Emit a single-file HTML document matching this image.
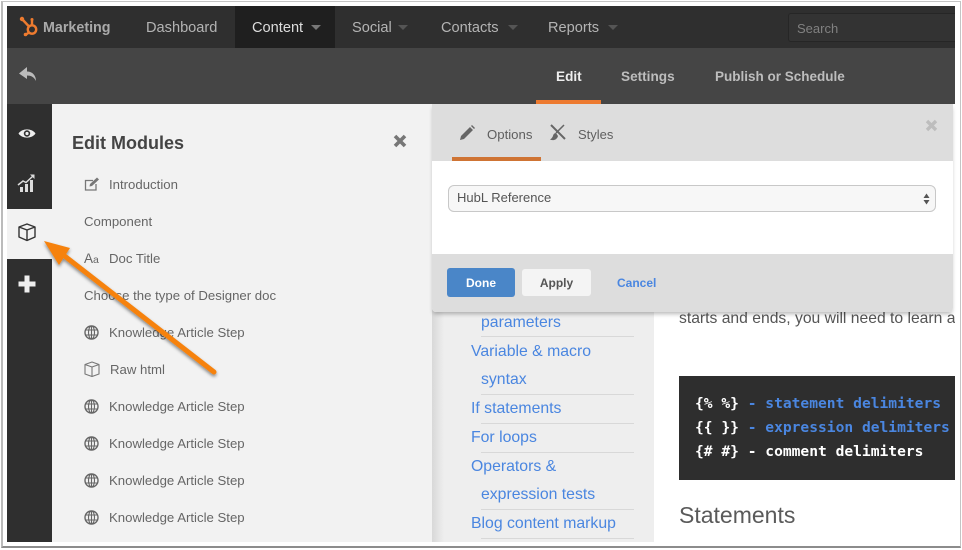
<!DOCTYPE html>
<html><head><meta charset="utf-8">
<style>
*{box-sizing:border-box}
html,body{margin:0;padding:0;width:962px;height:550px;overflow:hidden;background:#fff}
body{font-family:"Liberation Sans",Arial,sans-serif;position:relative}
.a{position:absolute}
.t{position:absolute;white-space:nowrap;line-height:18px}
.nav{font-size:14.6px;color:#b4b4b4;top:19px}
.sub{font-size:13.6px;color:#bdbdbd;font-weight:bold;top:68px}
.li{font-size:13.2px;color:#666;left:109px}
.lk{font-size:15.8px;color:#4a86e0}
.hr{position:absolute;height:1px;background:#d8d8d8;left:481px;width:153px}
.tri{position:absolute;width:0;height:0;border-left:5px solid transparent;border-right:5px solid transparent;border-top:5px solid #666}
.code{font-family:"DejaVu Sans Mono","Liberation Mono",monospace;font-weight:bold;font-size:14.6px;position:absolute;left:695px;white-space:pre;line-height:18px;color:#fff}
.code b{color:#4a86e0}
</style></head><body>
<div class="a" style="left:1px;top:1px;width:960px;height:547px;border:1px solid #c4c4c4;border-bottom:2px solid #8c8c8c;border-left:2px solid #bbb"></div>
<div class="a" style="left:7px;top:6px;width:948px;height:536px;background:#fff;overflow:hidden"></div>

<!-- top nav -->
<div class="a" style="left:7px;top:6px;width:948px;height:42px;background:#2f2f2f"></div>
<div class="a" style="left:235px;top:6px;width:100px;height:42px;background:#1f1f1f"></div>
<svg class="a" style="left:19px;top:16px" width="22" height="22" viewBox="0 0 22 22"><g fill="none" stroke="#ee7b2f" stroke-width="2.400"><circle cx="13" cy="13.500" r="4.200"/><path d="M3 3L10 10.500M13 9V3.500M10 16.500L7 18.500"/></g><circle cx="3" cy="3" r="2.200" fill="#ee7b2f"/><circle cx="13" cy="3.500" r="1.500" fill="#ee7b2f"/><circle cx="6.500" cy="18.500" r="1.800" fill="#ee7b2f"/></svg>
<div class="t nav" style="left:43px;font-weight:bold;color:#aaa;font-size:14.3px">Marketing</div>
<div class="t nav" style="left:146px">Dashboard</div>
<div class="t nav" style="left:252px;color:#ddd">Content</div><div class="tri" style="left:311px;top:25px;border-top-color:#777"></div>
<div class="t nav" style="left:352px">Social</div><div class="tri" style="left:398px;top:25px;border-top-color:#555"></div>
<div class="t nav" style="left:441px">Contacts</div><div class="tri" style="left:508px;top:25px;border-top-color:#555"></div>
<div class="t nav" style="left:548px">Reports</div><div class="tri" style="left:608px;top:25px;border-top-color:#555"></div>
<div class="a" style="left:788px;top:13px;width:167px;height:29px;background:#333;border:1px solid #262626;border-right:0;border-radius:3px 0 0 3px"></div>
<div class="t" style="left:797px;top:20px;font-size:13px;color:#818181">Search</div>

<!-- sub nav -->
<div class="a" style="left:7px;top:48px;width:948px;height:56px;background:#454545"></div>
<svg class="a" style="left:18px;top:66px" width="19" height="16" viewBox="0 0 19 16"><path d="M9 1L1 7.500L9 13V9.500C13 9.500 16 11 18 15C18 9.500 14.500 5.500 9 5.500Z" fill="#bbb"/></svg>
<div class="t sub" style="left:556px;color:#eee">Edit</div>
<div class="t sub" style="left:621px">Settings</div>
<div class="t sub" style="left:715px;font-size:13.500px">Publish or Schedule</div>
<div class="a" style="left:536px;top:100px;width:65px;height:4px;background:#ed7a30"></div>

<!-- main bg -->
<div class="a" style="left:432px;top:104px;width:222px;height:438px;background:#eee"></div>
<div class="a" style="left:432px;top:104px;width:12px;height:438px;background:linear-gradient(to right,#d8d8d8,#eee)"></div>
<div class="t lk" style="left:481px;top:314px">parameters</div><div class="hr" style="top:336px"></div>
<div class="t lk" style="left:471px;top:343px">Variable &amp; macro</div>
<div class="t lk" style="left:481px;top:371px">syntax</div><div class="hr" style="top:394px"></div>
<div class="t lk" style="left:471px;top:400px">If statements</div><div class="hr" style="top:423px"></div>
<div class="t lk" style="left:471px;top:429px">For loops</div><div class="hr" style="top:452px"></div>
<div class="t lk" style="left:471px;top:458px">Operators &amp;</div>
<div class="t lk" style="left:481px;top:486px">expression tests</div><div class="hr" style="top:509px"></div>
<div class="t lk" style="left:471px;top:515px">Blog content markup</div><div class="hr" style="top:538px"></div>

<div class="t" style="left:679px;top:310px;font-size:15.7px;color:#555;width:276px;overflow:hidden">starts and ends, you will need to learn a</div>
<div class="a" style="left:679px;top:376px;width:276px;height:104px;background:#2e2e2e"></div>
<div class="code" style="top:395px">{% %} <b>- statement delimiters</b></div>
<div class="code" style="top:419px">{{ }} <b>- expression delimiters</b></div>
<div class="code" style="top:443px">{# #} - comment delimiters</div>
<div class="t" style="left:679px;top:502px;font-size:23px;line-height:26px;color:#5a5a5a">Statements</div>

<!-- left rail -->
<div class="a" style="left:7px;top:104px;width:45px;height:438px;background:#2f2f2f"></div>
<div class="a" style="left:7px;top:209px;width:45px;height:50px;background:#f2f2f2"></div>
<svg class="a" style="left:18px;top:127px" width="18" height="13" viewBox="0 0 18 13"><path d="M0.500 6.500C4 1 14 1 17.500 6.500C14 12 4 12 0.500 6.500Z" fill="#eee"/><circle cx="9" cy="6.500" r="3.200" fill="#2f2f2f"/><circle cx="9" cy="6.500" r="1.600" fill="#eee"/></svg>
<svg class="a" style="left:17px;top:173px" width="20" height="20" viewBox="0 0 20 20"><g fill="#ddd"><rect x="3" y="14" width="3" height="5"/><rect x="8" y="11" width="3" height="8"/><rect x="13" y="7" width="3" height="12"/></g><path d="M1 12L6 8L9 9.500L16 3" fill="none" stroke="#ddd" stroke-width="1.500"/><path d="M13 1.500H17.500V6Z" fill="#ddd"/></svg>
<svg class="a" style="left:17px;top:222px" width="20" height="20" viewBox="0 0 20 20"><path d="M2 5L10 2L18 5V15L10 18.500L2 15ZM2 5L10 8L18 5M10 8V18.500" fill="none" stroke="#333" stroke-width="1.400" stroke-linejoin="round"/></svg>
<svg class="a" style="left:18px;top:275px" width="18" height="18" viewBox="0 0 18 18"><path d="M6.500 0.500H11.500V6.500H17.500V11.500H11.500V17.500H6.500V11.500H0.500V6.500H6.500Z" fill="#eee"/></svg>

<!-- sidebar -->
<div class="a" style="left:52px;top:104px;width:380px;height:438px;background:#f2f2f2"></div>
<div class="t" style="left:72px;top:133px;font-size:18px;font-weight:bold;color:#444;line-height:20px">Edit Modules</div>
<svg class="a" style="left:393px;top:134px" width="14" height="14" viewBox="0 0 14 14"><path d="M2 2L12 12M12 2L2 12" stroke="#777" stroke-width="3.600"/></svg>

<svg class="a" style="left:84px;top:176px" width="16" height="16" viewBox="0 0 16 16"><path d="M12 8V14H1.500V4.500H9" fill="none" stroke="#777" stroke-width="1.300"/><path d="M5.500 10.500L6 8L13 1.500L15 3.500L8 10Z" fill="#777"/></svg>
<div class="t li" style="top:176px">Introduction</div>
<div class="t li" style="left:84px;top:213px">Component</div>
<div class="t" style="left:84px;top:250px;font-size:13.500px;color:#666;font-weight:normal">A<span style="font-size:10.500px">a</span></div>
<div class="t li" style="top:250px">Doc Title</div>
<div class="t li" style="left:84px;top:287px">Choose the type of Designer doc</div>
<svg width="0" height="0" style="position:absolute"><defs><g id="g" fill="none" stroke="#666" stroke-width="1.100"><circle cx="7.500" cy="7.500" r="6.500" stroke-width="1.400"/><ellipse cx="7.500" cy="7.500" rx="3" ry="6.500"/><path d="M1.500 5H13.500M1.500 10H13.500M7.500 1V14"/></g></defs></svg>
<svg class="a" style="left:84px;top:325px" width="15" height="15"><use href="#g"/></svg>
<div class="t li" style="top:324px">Knowledge Article Step</div>
<svg class="a" style="left:84px;top:361px" width="16" height="16" viewBox="0 0 16 16"><path d="M1 3.500L8 1L15 3.500V13L8 15.500L1 13ZM1 3.500L8 6L15 3.500M8 6V15.500" fill="none" stroke="#777" stroke-width="1.100" stroke-linejoin="round"/></svg>
<div class="t li" style="left:110px;top:361px">Raw html</div>
<svg class="a" style="left:84px;top:399px" width="15" height="15"><use href="#g"/></svg>
<div class="t li" style="top:398px">Knowledge Article Step</div>
<svg class="a" style="left:84px;top:436px" width="15" height="15"><use href="#g"/></svg>
<div class="t li" style="top:435px">Knowledge Article Step</div>
<svg class="a" style="left:84px;top:473px" width="15" height="15"><use href="#g"/></svg>
<div class="t li" style="top:472px">Knowledge Article Step</div>
<svg class="a" style="left:84px;top:510px" width="15" height="15"><use href="#g"/></svg>
<div class="t li" style="top:509px">Knowledge Article Step</div>

<!-- modal -->
<div class="a" style="left:432px;top:104px;width:521px;height:208px;background:#fff;border-radius:0 0 4px 4px;box-shadow:0 3px 4px -1px rgba(0,0,0,.28)"></div>
<div class="a" style="left:432px;top:104px;width:521px;height:57px;background:#ddd"></div>
<div class="a" style="left:432px;top:254px;width:521px;height:58px;background:#ddd;border-radius:0 0 4px 4px"></div>
<div class="a" style="left:452px;top:157px;width:89px;height:4px;background:#cf7434"></div>
<svg class="a" style="left:459px;top:125px" width="16" height="16" viewBox="0 0 16 16"><path d="M1 15L2 11L11 2L14 5L5 14Z M12 1L13 0L16 3L15 4Z" fill="#666"/></svg>
<div class="t" style="left:487px;top:126px;font-size:13.200px;color:#5f5f5f">Options</div>
<svg class="a" style="left:549px;top:124px" width="18" height="18" viewBox="0 0 18 18"><path d="M2 1L16 15" stroke="#666" stroke-width="2"/><path d="M15 1L7 9" stroke="#666" stroke-width="1.500"/><path d="M7 9C5 9 4 11 4 12C3 14 2 15 1 15.500C4 17 8 16 9 12Z" fill="#666"/></svg>
<div class="t" style="left:578px;top:126px;font-size:13px;color:#5f5f5f">Styles</div>
<svg class="a" style="left:925px;top:119px" width="13" height="13" viewBox="0 0 13 13"><path d="M2 2L11 11M11 2L2 11" stroke="#bdbdbd" stroke-width="3.400"/></svg>

<div class="a" style="left:448px;top:185px;width:488px;height:27px;background:#f7f7f7;border:1px solid #c8c8c8;border-radius:6px"></div>
<div class="t" style="left:457px;top:189px;font-size:13px;color:#555">HubL Reference</div>
<svg class="a" style="left:922px;top:193px" width="9" height="12" viewBox="0 0 9 12"><path d="M4.500 0.500L7.500 5H1.500ZM4.500 11.500L1.500 7H7.500Z" fill="#555"/></svg>

<div class="a" style="left:447px;top:268px;width:68px;height:29px;background:#4a86c8;border-radius:3px"></div>
<div class="t" style="left:447px;width:68px;text-align:center;top:274px;font-size:12px;font-weight:bold;color:#fff">Done</div>
<div class="a" style="left:522px;top:269px;width:69px;height:27px;background:#f4f4f4;border-radius:3px"></div>
<div class="t" style="left:522px;width:69px;text-align:center;top:274px;font-size:12px;font-weight:bold;color:#555">Apply</div>
<div class="t" style="left:617px;top:274px;font-size:12px;font-weight:bold;color:#4a86e0">Cancel</div>

<!-- arrow -->
<svg class="a" style="left:0;top:0;pointer-events:none" width="962" height="550" viewBox="0 0 962 550">
<defs><filter id="s" x="-20%" y="-20%" width="140%" height="140%"><feDropShadow dx="0" dy="2" stdDeviation="1.500" flood-color="#000" flood-opacity=".45"/></filter></defs>
<g filter="url(#s)"><path d="M214 372L62 254" stroke="#f6820c" stroke-width="5" stroke-linecap="round"/><path d="M44 241L70 248L59 265Z" fill="#f6820c"/></g>
</svg>
</body></html>
